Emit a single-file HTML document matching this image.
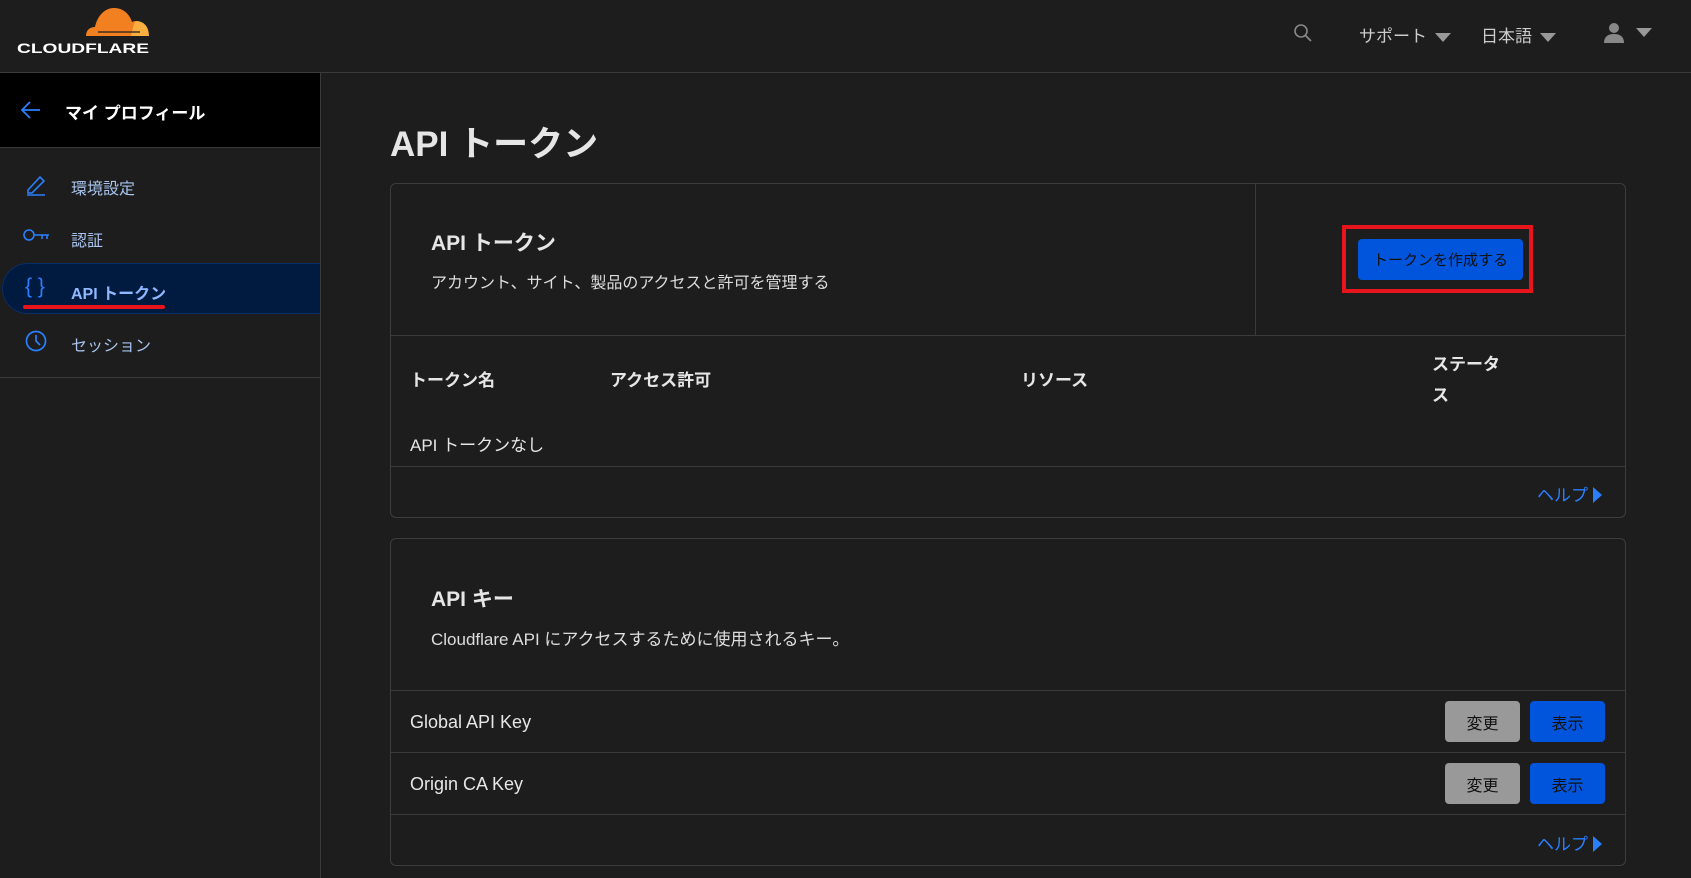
<!DOCTYPE html>
<html><head><meta charset="utf-8"><style>
*{margin:0;padding:0;box-sizing:border-box}
body{width:1691px;height:878px;background:#1d1d1d;color:#e6e6e6;font-family:"Liberation Sans","Noto Sans CJK JP",sans-serif;position:relative;overflow:hidden}
.a{position:absolute;white-space:nowrap}
.line{position:absolute;background:#3a3a3a}
.card{position:absolute;border:1px solid #3d3d3d;border-radius:6px}
.btn{position:absolute;border-radius:4px;font-size:16px;color:#111;display:flex;align-items:center;justify-content:center}
.nav{font-size:16px;color:#a8c4ee}
.tri{display:inline-block;width:0;height:0;border-left:8px solid transparent;border-right:8px solid transparent;border-top:9px solid #999;vertical-align:middle;margin-left:8px}
.help{font-size:17px;color:#2a7fff}
.help span{display:inline-block;width:0;height:0;border-top:8px solid transparent;border-bottom:8px solid transparent;border-left:9px solid #2a7fff;margin-left:5px;vertical-align:-2px}
</style></head><body>
<!-- header -->
<svg class="a" style="left:0;top:0" width="160" height="60" viewBox="0 0 160 60">
<path d="M86 36 C86 30 90 27 95 27 C97 17 104 8 114 8 C124 8 130 15 132 22 C135 20 140 21 142 24 L136 36 Z" fill="#f38020"/>
<path d="M136 21 C144 21 149 27 149 36 L131 36 C133 28 134 22 136 21Z" fill="#faae40"/>
<path d="M98 32 L140 32" stroke="#1d1d1d" stroke-width="1.2"/>
<text x="17" y="53" font-family="Liberation Sans" font-weight="bold" font-size="14" fill="#fff" textLength="132" lengthAdjust="spacingAndGlyphs">CLOUDFLARE</text>
</svg>
<svg class="a" style="left:1293px;top:23px" width="20" height="20" viewBox="0 0 20 20"><circle cx="8" cy="8" r="6" fill="none" stroke="#888" stroke-width="1.6"/><path d="M12.5 12.5 L18 18" stroke="#888" stroke-width="1.8"/></svg>
<div class="a" style="left:1359px;top:22px;font-size:17px;color:#ccc">サポート<span class="tri"></span></div>
<div class="a" style="left:1481px;top:22px;font-size:17px;color:#ccc">日本語<span class="tri"></span></div>
<svg class="a" style="left:1603px;top:22px" width="22" height="22" viewBox="0 0 22 22"><circle cx="11" cy="6" r="5" fill="#888"/><path d="M1 21 C1 14 6 12 11 12 C16 12 21 14 21 21Z" fill="#888"/></svg>
<span class="a tri" style="left:1636px;top:28px;margin:0"></span>
<div class="line" style="left:0;top:72px;width:1691px;height:1px"></div>
<!-- sidebar -->
<div class="a" style="left:0;top:73px;width:320px;height:74px;background:#000"></div>
<div class="line" style="left:320px;top:73px;width:1px;height:805px"></div>
<div class="line" style="left:0;top:147px;width:320px;height:1px"></div>
<svg class="a" style="left:20px;top:100px" width="22" height="20" viewBox="0 0 22 20"><path d="M20 10 H2 M10 2 L2 10 L10 18" fill="none" stroke="#2a7fff" stroke-width="1.8"/></svg>
<div class="a" style="left:65px;top:99px;font-size:17px;font-weight:bold;color:#fff">マイ プロフィール</div>
<svg class="a" style="left:25px;top:174px" width="22" height="22" viewBox="0 0 22 22"><path d="M3 16 L15 3 L19 7 L7 19 L3 19Z" fill="none" stroke="#2a7fff" stroke-width="1.6"/><path d="M2 21 H20" stroke="#2a7fff" stroke-width="1.6"/></svg>
<div class="a nav" style="left:71px;top:175px">環境設定</div>
<svg class="a" style="left:23px;top:228px" width="27" height="14" viewBox="0 0 27 14"><circle cx="6" cy="7" r="5" fill="none" stroke="#2a7fff" stroke-width="1.6"/><path d="M11 7 H26 M19 7 V11 M24 7 V11" stroke="#2a7fff" stroke-width="1.6"/></svg>
<div class="a nav" style="left:71px;top:227px">認証</div>
<div class="a" style="left:2px;top:263px;width:318px;height:51px;background:#001a40;border:1px solid #0a2e66;border-right:none;border-radius:26px 0 0 26px"></div>
<div class="a" style="left:25px;top:275px;font-size:21px;color:#2a7fff">{ }</div>
<div class="a" style="left:71px;top:280px;font-size:16px;font-weight:bold;color:#8fb8ff">API トークン</div>
<div class="a" style="left:23px;top:305px;width:142px;height:4px;background:#e8141c;border-radius:2px"></div>
<svg class="a" style="left:25px;top:330px" width="22" height="22" viewBox="0 0 22 22"><circle cx="11" cy="11" r="9.5" fill="none" stroke="#2a7fff" stroke-width="1.7"/><path d="M11 5 V11 L15 15" fill="none" stroke="#2a7fff" stroke-width="1.7"/></svg>
<div class="a nav" style="left:71px;top:332px">セッション</div>
<div class="line" style="left:0;top:377px;width:320px;height:1px"></div>
<!-- main -->
<div class="a" style="left:390px;top:116px;font-size:35px;font-weight:bold;color:#e6e6e6">API トークン</div>
<div class="card" style="left:390px;top:183px;width:1236px;height:335px"></div>
<div class="line" style="left:1255px;top:183px;width:1px;height:152px"></div>
<div class="line" style="left:390px;top:335px;width:1236px;height:1px"></div>
<div class="a" style="left:431px;top:227px;font-size:21px;font-weight:bold">API トークン</div>
<div class="a" style="left:431px;top:269px;font-size:16px;color:#ddd">アカウント、サイト、製品のアクセスと許可を管理する</div>
<div class="a" style="left:1342px;top:225px;width:191px;height:68px;border:4px solid #e8141c"></div>
<div class="btn" style="left:1358px;top:239px;width:165px;height:41px;background:#0055dc;font-size:15px">トークンを作成する</div>
<div class="a" style="left:410px;top:366px;font-size:17px;font-weight:bold">トークン名</div>
<div class="a" style="left:610px;top:366px;font-size:17px;font-weight:bold">アクセス許可</div>
<div class="a" style="left:1021px;top:366px;font-size:17px;font-weight:bold">リソース</div>
<div class="a" style="left:1432px;top:349px;font-size:17px;font-weight:bold;line-height:31px">ステータ<br>ス</div>
<div class="a" style="left:410px;top:431px;font-size:17px">API トークンなし</div>
<div class="line" style="left:390px;top:466px;width:1236px;height:1px"></div>
<div class="a help" style="left:1537px;top:481px">ヘルプ<span></span></div>

<div class="card" style="left:390px;top:538px;width:1236px;height:328px"></div>
<div class="a" style="left:431px;top:583px;font-size:21px;font-weight:bold">API キー</div>
<div class="a" style="left:431px;top:625px;font-size:17px;color:#ddd">Cloudflare API にアクセスするために使用されるキー。</div>
<div class="line" style="left:390px;top:690px;width:1236px;height:1px"></div>
<div class="a" style="left:410px;top:712px;font-size:18px">Global API Key</div>
<div class="btn" style="left:1445px;top:701px;width:75px;height:41px;background:#999">変更</div>
<div class="btn" style="left:1530px;top:701px;width:75px;height:41px;background:#0055dc">表示</div>
<div class="line" style="left:390px;top:752px;width:1236px;height:1px"></div>
<div class="a" style="left:410px;top:774px;font-size:18px">Origin CA Key</div>
<div class="btn" style="left:1445px;top:763px;width:75px;height:41px;background:#999">変更</div>
<div class="btn" style="left:1530px;top:763px;width:75px;height:41px;background:#0055dc">表示</div>
<div class="line" style="left:390px;top:814px;width:1236px;height:1px"></div>
<div class="a help" style="left:1537px;top:830px">ヘルプ<span></span></div>
</body></html>
